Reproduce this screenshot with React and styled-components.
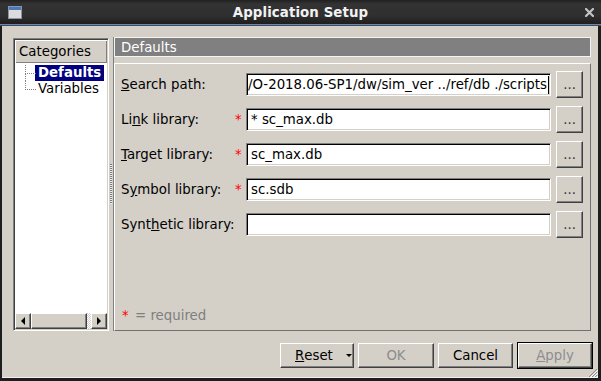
import React from 'react';
import styled, { createGlobalStyle, css } from 'styled-components';

const Global = createGlobalStyle`
  html, body { margin: 0; padding: 0; background: #d4d0c8; }
  body { font-family: "DejaVu Sans", "Liberation Sans", sans-serif; font-size: 10pt; color: #000; }
  #root { width: 601px; height: 381px; }
  * { box-sizing: border-box; }
`;

const raised = css`
  border: 1px solid;
  border-color: #ffffff #404040 #404040 #ffffff;
  box-shadow: inset -1px -1px #808080;
`;

const Window = styled.div`
  width: 601px;
  height: 381px;
  display: flex;
  flex-direction: column;
  overflow: hidden;
  position: relative;
  background: #d4d0c8;
`;

const TitleBar = styled.div`
  height: 26px;
  flex: none;
  display: grid;
  grid-template-columns: 22px 1fr 22px;
  align-items: center;
  padding-bottom: 2px;
  background: linear-gradient(
    to bottom,
    #202020 0px,
    #333333 4px,
    #2f2f2f 16px,
    #1e1e1e 24px,
    #6d86a8 24px,
    #6d86a8 25px,
    #3e4d63 25px,
    #3e4d63 26px
  );
`;

const TitleIcon = styled.svg`
  margin-left: 8px;
  display: block;
`;

const TitleText = styled.div`
  text-align: center;
  color: #f2f2f2;
  font-weight: bold;
  font-size: 10pt;
  letter-spacing: 0.1px;
`;

const CloseIcon = styled.svg`
  margin-left: 6px;
  display: block;
`;

const Body = styled.div`
  flex: 1;
  display: flex;
  flex-direction: column;
  border-left: 2px solid #1e1e1e;
  border-right: 3px solid #1e1e1e;
  border-bottom: 3px solid #1e1e1e;
  box-shadow: inset 0 -1px #f0f0f0;
`;

const Main = styled.div`
  height: 305px;
  flex: none;
  display: flex;
  padding: 11px 7px 0 11px;
`;

const LeftPanel = styled.div`
  width: 96px;
  flex: none;
  margin-top: 1px;
  display: flex;
  flex-direction: column;
  border: 1px solid;
  border-color: #808080 #ffffff #ffffff #808080;
  padding: 1px 1px 1px 1px;
  box-shadow: inset 1px 1px #404040;
`;

const CatHeader = styled.div`
  height: 23px;
  flex: none;
  display: flex;
  align-items: center;
  padding-left: 4px;
  background: #d4d0c8;
  box-shadow: inset 1px 1px #ffffff, inset -1px -1px #808080;
`;

const List = styled.div`
  flex: 1;
  background: #ffffff;
  padding-top: 2px;
`;

const TreeItem = styled.div`
  position: relative;
  height: 16px;
  display: flex;
  align-items: center;
  padding-left: 20px;

  &::before {
    content: '';
    position: absolute;
    left: 10px;
    top: 0;
    height: 8px;
    width: 10px;
    border-left: 1px dotted #808080;
    border-bottom: 1px dotted #808080;
  }

  ${p =>
    !p.$last &&
    css`
      &::after {
        content: '';
        position: absolute;
        left: 10px;
        top: 8px;
        bottom: 0;
        border-left: 1px dotted #808080;
      }
    `}
`;

const TreeLabel = styled.span`
  height: 16px;
  line-height: 16px;
  padding: 0 3px;
  white-space: nowrap;
  ${p =>
    p.$selected &&
    css`
      background: #000080;
      color: #ffffff;
      font-weight: bold;
    `}
`;

const ScrollBar = styled.div`
  height: 16px;
  flex: none;
  display: flex;
  background: #d4d0c8;
`;

const ScrollBtn = styled.div`
  width: 16px;
  flex: none;
  display: flex;
  align-items: center;
  justify-content: center;
  background: #d4d0c8;
  ${raised}
`;

const Thumb = styled.div`
  width: 56px;
  flex: none;
  background: #d4d0c8;
  ${raised}
`;

const Trough = styled.div`
  flex: 1;
  background-color: #d4d0c8;
  background-image: repeating-conic-gradient(#ffffff 0 25%, #d4d0c8 0 50%);
  background-size: 2px 2px;
`;

const Triangle = styled.span`
  width: 0;
  height: 0;
  border-top: 4px solid transparent;
  border-bottom: 4px solid transparent;
  ${p => (p.$dir === 'left' ? 'border-right: 4px solid #000;' : 'border-left: 4px solid #000;')}
`;

const Splitter = styled.div`
  width: 4px;
  flex: none;
  display: flex;
  align-items: center;
  justify-content: center;
`;

const Grip = styled.div`
  width: 2px;
  height: 40px;
  background: repeating-linear-gradient(to bottom, #7a7a7a 0 1px, #eeeeee 1px 2px);
`;

const RightPanel = styled.div`
  flex: 1;
  display: flex;
  flex-direction: column;
  border-left: 1px solid #808080;
`;

const SectionHeader = styled.div`
  height: 20px;
  flex: none;
  display: flex;
  align-items: center;
  padding-left: 6px;
  background: #808080;
  color: #ffffff;
  border: 1px solid #f4f4f4;
`;

const Content = styled.div`
  flex: 1;
  margin-top: 6px;
  display: flex;
  flex-direction: column;
  padding: 3px 7px 6px 5px;
  border: 1px solid;
  border-color: #ffffff #707070 #707070 #ffffff;
`;

const Row = styled.div`
  height: 35px;
  display: flex;
  align-items: center;
`;

const Label = styled.div`
  width: 114px;
  flex: none;
  padding-left: 1px;
  white-space: nowrap;
`;

const Star = styled.span`
  display: inline-block;
  width: ${p => p.$w || 12}px;
  flex: none;
  color: #ff0000;
  padding-left: 1px;
`;

const Field = styled.div`
  flex: 1;
  height: 23px;
  min-width: 0;
  overflow: hidden;
  display: flex;
  align-items: center;
  justify-content: ${p => (p.$end ? 'flex-end' : 'flex-start')};
  padding: 0 ${p => (p.$end ? '1px' : '4px')};
  background: #ffffff;
  border: 1px solid;
  border-color: #808080 #ffffff #ffffff #808080;
  box-shadow: inset 1px 1px #000000, inset -1px -1px #d4d0c8;
  white-space: nowrap;
`;

const Caret = styled.span`
  width: 1px;
  height: 18px;
  flex: none;
  background: #000;
  margin-left: 1px;
`;

const Browse = styled.button`
  width: 27px;
  height: 27px;
  flex: none;
  margin-left: 5px;
  padding: 0 0 1px 0;
  font: inherit;
  font-size: 10pt;
  color: #333;
  background: #d4d0c8;
  ${raised}
`;

const Required = styled.div`
  margin-top: auto;
  padding-left: 1px;
  height: 16px;
  line-height: 16px;
  color: #7f7f7f;
`;

const Footer = styled.div`
  flex: 1;
  display: flex;
  justify-content: flex-end;
  align-items: flex-start;
  padding: 12px 6px 0 0;
  gap: 4px;
`;

const Button = styled.button`
  width: ${p => p.$w}px;
  height: 25px;
  flex: none;
  padding: 0;
  font: inherit;
  color: ${p => (p.disabled ? '#8d8d8d' : '#000')};
  background: #d4d0c8;
  display: flex;
  align-items: center;
  justify-content: center;
  ${raised}
  ${p =>
    p.$default &&
    css`
      outline: 1px solid #000;
      margin-left: 1px;
    `}
`;

const MenuButton = styled(Button)`
  justify-content: flex-start;
  padding-left: 14px;
`;

const DropArrow = styled.span`
  width: 0;
  height: 0;
  margin-left: 13px;
  border-left: 3px solid transparent;
  border-right: 3px solid transparent;
  border-top: 3px solid #000;
`;

const SizeGrip = styled.svg`
  position: absolute;
  right: 3px;
  bottom: 3px;
`;

const rows = [
  { pre: '', key: 'S', post: 'earch path:', star: false, value: '/O-2018.06-SP1/dw/sim_ver ../ref/db ./scripts', focused: true },
  { pre: 'Li', key: 'n', post: 'k library:', star: true, value: '* sc_max.db' },
  { pre: '', key: 'T', post: 'arget library:', star: true, value: 'sc_max.db' },
  { pre: 'S', key: 'y', post: 'mbol library:', star: true, value: 'sc.sdb' },
  { pre: 'Synt', key: 'h', post: 'etic library:', star: false, value: '' },
];

export default function App() {
  return (
    <>
      <Global />
      <Window>
        <TitleBar>
          <TitleIcon width="14" height="13" viewBox="0 0 14 13">
            <rect x="0.5" y="0.5" width="13" height="12" fill="#dcdcdc" stroke="#8a96a8" />
            <rect x="1" y="1" width="12" height="3" fill="#4b78bd" />
          </TitleIcon>
          <TitleText>Application Setup</TitleText>
          <CloseIcon width="9" height="9" viewBox="0 0 9 9">
            <path d="M1 1 L8 8 M8 1 L1 8" stroke="#c4c4c4" strokeWidth="2.2" strokeLinecap="square" />
          </CloseIcon>
        </TitleBar>
        <Body>
          <Main>
            <LeftPanel>
              <CatHeader>Categories</CatHeader>
              <List>
                <TreeItem>
                  <TreeLabel $selected>Defaults</TreeLabel>
                </TreeItem>
                <TreeItem $last>
                  <TreeLabel>Variables</TreeLabel>
                </TreeItem>
              </List>
              <ScrollBar>
                <ScrollBtn>
                  <Triangle $dir="left" />
                </ScrollBtn>
                <Thumb />
                <Trough />
                <ScrollBtn>
                  <Triangle $dir="right" />
                </ScrollBtn>
              </ScrollBar>
            </LeftPanel>
            <Splitter>
              <Grip />
            </Splitter>
            <RightPanel>
              <SectionHeader>Defaults</SectionHeader>
              <Content>
                {rows.map(r => (
                  <Row key={r.post}>
                    <Label>
                      {r.pre}
                      <u>{r.key}</u>
                      {r.post}
                    </Label>
                    <Star>{r.star ? '*' : ''}</Star>
                    <Field $end={r.focused}>
                      {r.value}
                      {r.focused && <Caret />}
                    </Field>
                    <Browse>...</Browse>
                  </Row>
                ))}
                <Required>
                  <Star $w={14}>*</Star>= required
                </Required>
              </Content>
            </RightPanel>
          </Main>
          <Footer>
            <MenuButton $w={74}>
              <u>R</u>eset
              <DropArrow />
            </MenuButton>
            <Button $w={76} disabled>
              OK
            </Button>
            <Button $w={75}>Cancel</Button>
            <Button $w={74} $default disabled>
              <u>A</u>pply
            </Button>
          </Footer>
        </Body>
        <SizeGrip width="10" height="10" viewBox="0 0 10 10">
          <path d="M9 1 L1 9 M9 4 L4 9 M9 7 L7 9" stroke="#8a8a8a" strokeWidth="1" />
          <path d="M10 2 L2 10 M10 5 L5 10 M10 8 L8 10" stroke="#ffffff" strokeWidth="1" />
        </SizeGrip>
      </Window>
    </>
  );
}
